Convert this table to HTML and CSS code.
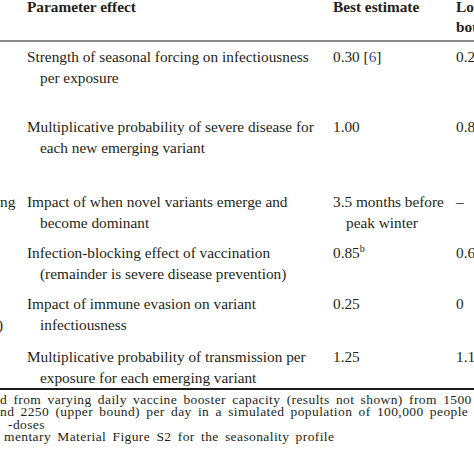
FILE: index.html
```html
<!DOCTYPE html>
<html lang="en">
<head>
<meta charset="utf-8">
<title>Model parameters</title>
<link rel="stylesheet" href="styles.css">
</head>
<body>
<main class="page">
  <table class="params">
    <colgroup>
      <col class="c-name">
      <col class="c-effect">
      <col class="c-best">
      <col class="c-low">
    </colgroup>
    <thead>
      <tr>
        <th class="name"></th>
        <th>Parameter effect</th>
        <th>Best estimate</th>
        <th>Lower<br>bound</th>
      </tr>
    </thead>
    <tbody>
      <tr class="r1">
        <td class="name"></td>
        <td class="hang">Strength of seasonal forcing on infectiousness<br>per exposure</td>
        <td>0.30 [<a class="ref" href="#">6</a>]</td>
        <td>0.20</td>
      </tr>
      <tr class="r2">
        <td class="name"></td>
        <td class="hang">Multiplicative probability of severe disease for<br>each new emerging variant</td>
        <td>1.00</td>
        <td>0.80</td>
      </tr>
      <tr class="r3">
        <td class="name">ng</td>
        <td class="hang">Impact of when novel variants emerge and<br>become dominant</td>
        <td class="hang">3.5 months before<br>peak winter</td>
        <td>–</td>
      </tr>
      <tr class="r4">
        <td class="name"></td>
        <td class="hang">Infection-blocking effect of vaccination<br>(remainder is severe disease prevention)</td>
        <td>0.85<sup>b</sup></td>
        <td>0.60</td>
      </tr>
      <tr class="r5">
        <td class="name"><br><span class="clip">)</span></td>
        <td class="hang">Impact of immune evasion on variant<br>infectiousness</td>
        <td>0.25</td>
        <td>0</td>
      </tr>
      <tr class="r6">
        <td class="name"></td>
        <td class="hang">Multiplicative probability of transmission per<br>exposure for each emerging variant</td>
        <td>1.25</td>
        <td>1.10</td>
      </tr>
    </tbody>
  </table>
  <div class="notes">
    <p class="note">d from varying daily vaccine booster capacity (results not shown) from 1500</p>
    <p class="note">nd 2250 (upper bound) per day in a simulated population of 100,000 people for</p>
    <p class="note n3">-doses</p>
    <p class="note n4">mentary Material Figure S2 for the seasonality profile</p>
  </div>
</main>
</body>
</html>
```
FILE: styles.css
```css
html, body {
  margin: 0;
  padding: 0;
  background: #ffffff;
  overflow: hidden;
}

.page {
  width: 474px;
  height: 474px;
  overflow: hidden;
  font-family: "Liberation Serif", "DejaVu Serif", serif;
  color: #231f20;
}

.params {
  border-collapse: collapse;
  table-layout: fixed;
  width: 570px;
  margin-top: -3px;
  font-size: 15.3px;
  line-height: 21px;
}

.c-name { width: 14px; }
.c-effect { width: 306px; }
.c-best { width: 123px; }
.c-low { width: 127px; }

.params th,
.params td {
  text-align: left;
  vertical-align: top;
  padding: 4px 0 0 13px;
  white-space: nowrap;
}

.params th {
  font-weight: bold;
  padding-top: 0;
  padding-bottom: 3px;
  line-height: 20px;
}

.params th.name,
.params td.name {
  padding-left: 0;
}

.params thead tr {
  border-bottom: 2px solid #8a8a8a;
}

.params tbody tr:last-child {
  border-bottom: 2px solid #1a1a1a;
}

.params td.hang {
  padding-left: 26px;
  text-indent: -13px;
}

.r1 { height: 71px; }
.r2 { height: 75px; }
.r3 { height: 51px; }
.r4 { height: 51px; }
.r5 { height: 53px; }
.r6 { height: 46px; }

.ref {
  color: #3a4ea0;
  text-decoration: none;
}

sup {
  font-size: 10px;
  line-height: 0;
  vertical-align: 6px;
}

.clip {
  margin-left: -2px;
}

.notes {
  font-size: 13.5px;
  letter-spacing: 0.4px;
  word-spacing: 2.5px;
  line-height: 12.3px;
  padding-top: 4px;
}

.note {
  margin: 0;
  white-space: nowrap;
}

.n3 { padding-left: 8px; }
.n4 { padding-left: 4px; }
```
